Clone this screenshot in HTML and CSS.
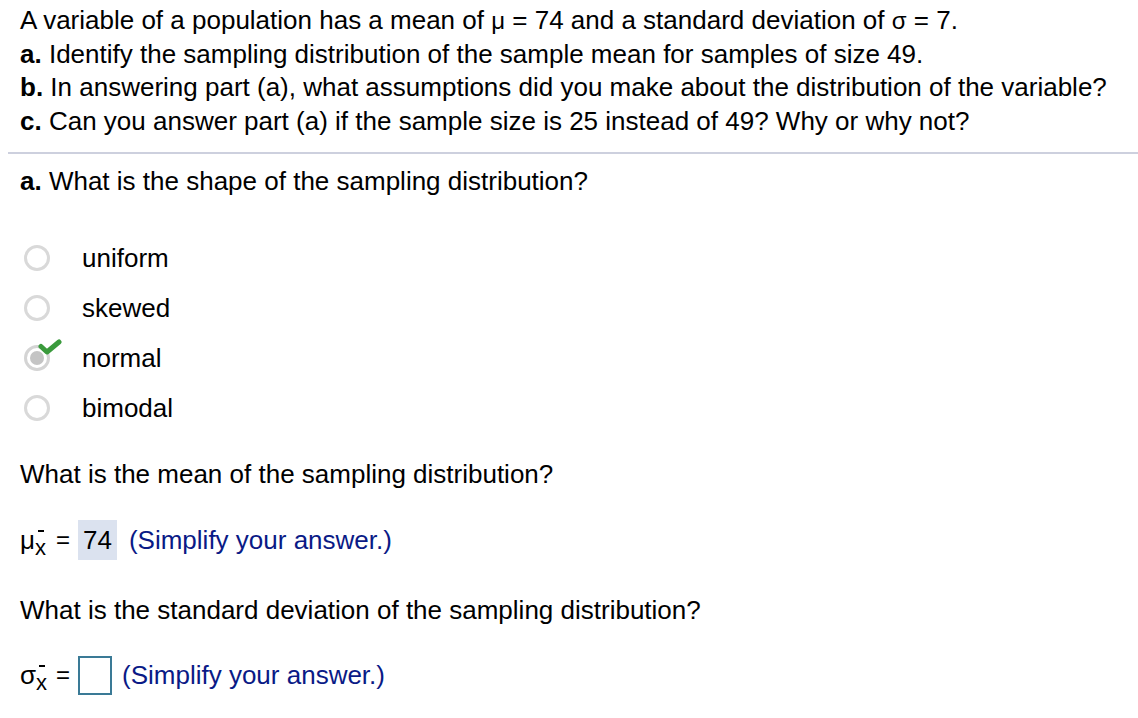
FILE: index.html
```html
<!DOCTYPE html>
<html>
<head>
<meta charset="utf-8">
<link rel="stylesheet" href="styles.css">
</head>
<body>
<div class="page">
  <div class="problem">
    <p class="line">A variable of a population has a mean of <span class="sym">μ</span> = 74 and a standard deviation of <span class="sym">σ</span> = 7.</p>
    <p class="line"><b>a.</b> Identify the sampling distribution of the sample mean for samples of size 49.</p>
    <p class="line"><b>b.</b> In answering part (a), what assumptions did you make about the distribution of the variable?</p>
    <p class="line"><b>c.</b> Can you answer part (a) if the sample size is 25 instead of 49? Why or why not?</p>
  </div>
  <div class="divider"></div>
  <div class="answers">
    <p class="q"><b>a.</b> What is the shape of the sampling distribution?</p>
    <ul class="options">
      <li class="opt"><span class="radio"></span><span>uniform</span></li>
      <li class="opt"><span class="radio"></span><span>skewed</span></li>
      <li class="opt"><span class="radio checked"><span class="dot"></span><svg class="check" viewBox="0 0 24 16" width="24" height="16"><path d="M3 7.5 L9 13 L21 3" fill="none" stroke="#3a9a3c" stroke-width="5" stroke-linejoin="round" stroke-linecap="round"/></svg></span><span>normal</span></li>
      <li class="opt"><span class="radio"></span><span>bimodal</span></li>
    </ul>
    <p class="q2">What is the mean of the sampling distribution?</p>
    <div class="eq eq-mean">
      <span class="var"><span class="base">μ</span><span class="sub">x</span></span>
      <span class="eqs">=</span>
      <span class="ans">74</span>
      <span class="hint">(Simplify your answer.)</span>
    </div>
    <p class="q3">What is the standard deviation of the sampling distribution?</p>
    <div class="eq eq-sd">
      <span class="var"><span class="base">σ</span><span class="sub">x</span></span>
      <span class="eqs">=</span>
      <span class="box"></span>
      <span class="hint">(Simplify your answer.)</span>
    </div>
  </div>
</div>
</body>
</html>
```
FILE: styles.css
```css
html, body {
  margin: 0;
  padding: 0;
  background: #ffffff;
}
body {
  font-family: "Liberation Sans", Arial, sans-serif;
  font-size: 26px;
  color: #000;
}
.page {
  padding: 0 0 0 8px;
}
p { margin: 0; }
.problem {
  padding: 4px 0 0 12px;
}
.line {
  line-height: 33.5px;
}
.sym { font-size: 24px; }
.divider {
  height: 2px;
  background: #cdd0de;
  margin-top: 14px;
}
.answers {
  padding-left: 12px;
}
.q {
  margin-top: 12px;
  line-height: 30px;
}
.options {
  list-style: none;
  margin: 37px 0 0 0;
  padding: 0;
}
.opt {
  display: flex;
  align-items: center;
  height: 50px;
}
.radio {
  position: relative;
  width: 20px;
  height: 20px;
  border: 3px solid #d9d9d9;
  border-radius: 50%;
  margin-left: 4px;
  margin-right: 32px;
  flex: none;
}
.radio.checked {
  border-color: #d4d4d4;
}
.dot {
  position: absolute;
  left: 3px;
  top: 3px;
  width: 14px;
  height: 14px;
  border-radius: 50%;
  background: #c4c4c4;
}
.check {
  position: absolute;
  left: 11px;
  top: -9px;
}
.q2 {
  margin-top: 26px;
  line-height: 30px;
}
.eq {
  display: flex;
  align-items: center;
}
.eq-mean {
  margin-top: 31px;
  height: 40px;
}
.var {
  display: inline-flex;
  align-items: flex-start;
  flex: none;
  width: 36px;
  height: 40px;
}
.base {
  line-height: 40px;
}
.sub {
  position: relative;
  margin-top: 17px;
  margin-left: 0;
  font-size: 22px;
  line-height: 22px;
}
.sub::before {
  content: "";
  position: absolute;
  left: 3px;
  top: -7px;
  width: 6px;
  height: 2px;
  background: #000;
}
.eqs {
  font-size: 24px;
  margin-right: 8px;
}
.ans {
  background: #dbe2ef;
  height: 40px;
  line-height: 40px;
  padding: 0 5px;
  margin-right: 12px;
}
.hint {
  color: #0a1a86;
}
.q3 {
  margin-top: 35px;
  line-height: 30px;
}
.eq-sd {
  margin-top: 30px;
  height: 40px;
}
.box {
  width: 30px;
  height: 35px;
  border: 2px solid #3a7a96;
  margin-right: 10px;
}
```
